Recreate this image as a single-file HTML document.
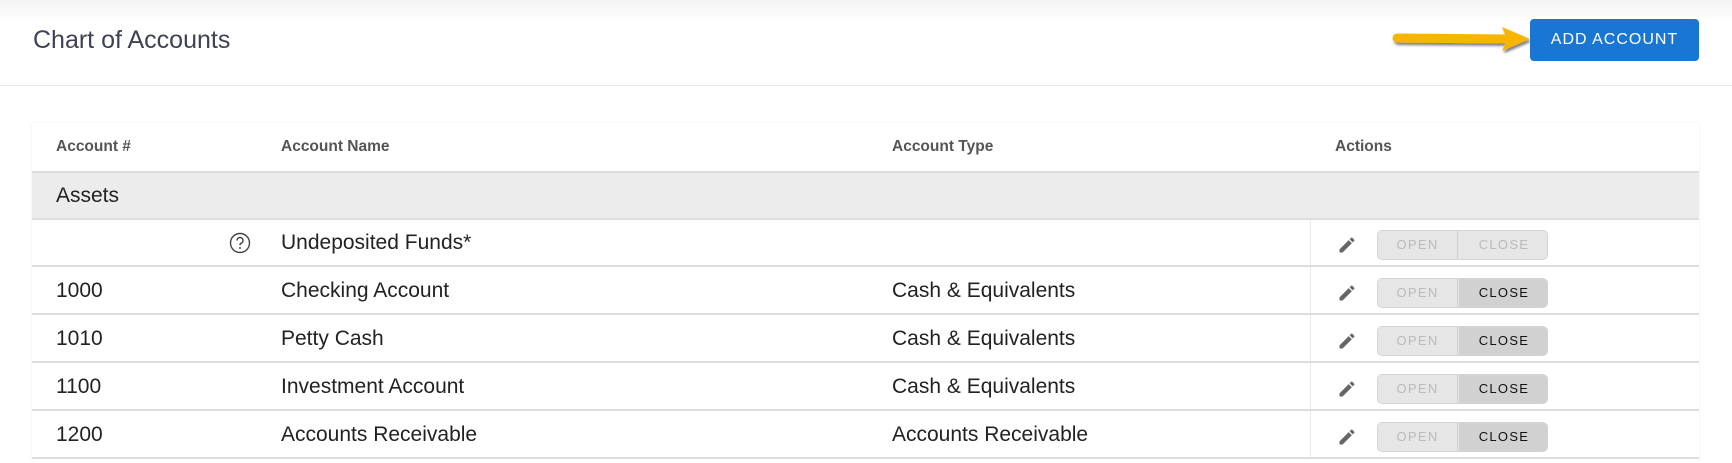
<!DOCTYPE html>
<html><head><meta charset="utf-8"><style>
*{box-sizing:border-box;margin:0;padding:0}
body{width:1732px;height:457px;overflow:hidden;background:#fff;font-family:"Liberation Sans",Arial,sans-serif;position:relative}
.top{position:absolute;left:0;top:0;width:1732px;height:86px;background:linear-gradient(#f3f3f3 0,#fff 22px);border-bottom:1px solid #e8e8e8}
.title{position:absolute;left:33px;top:26px;font-size:25px;color:#3f4254}
.btn{position:absolute;left:1530px;top:19px;width:169px;height:42px;background:#1976d2;border-radius:4px;color:#fff;font-size:16px;letter-spacing:1px;text-align:center;line-height:42px}
.card{position:absolute;left:32px;top:123px;width:1667px;height:340px;background:#fff;border-radius:4px;box-shadow:0 0 3px rgba(0,0,0,.08)}
.row{position:absolute;left:32px;width:1667px;border-bottom:2px solid #ddd}
.c{position:absolute;top:0;white-space:nowrap}
.h{font-weight:bold;font-size:15.5px;color:#555}
.b{font-size:21px;color:#222}
.tg{position:absolute;left:1377px;width:171px;height:30px;border:1px solid #d4d4d4;border-radius:5px;background:#e6e6e6;overflow:hidden;font-size:13px;letter-spacing:1.3px;color:#bbb}
.tg span{position:absolute;top:0;height:28px;line-height:28px;text-align:center}
.o{left:0;width:80px;border-right:1px solid #d0d0d0}
.cl{left:81px;width:90px}
.act{background:#d1d1d1;color:#111}
</style></head><body>
<div class="top"></div>
<div class="title">Chart of Accounts</div>
<svg style="position:absolute;left:1390px;top:24px" width="145" height="32" viewBox="0 0 145 32">
<defs><filter id="s"><feDropShadow dx="1.5" dy="2.5" stdDeviation="1.2" flood-color="#000" flood-opacity=".5"/></filter></defs>
<g filter="url(#s)"><path d="M7 14 L118 15" stroke="#f7b500" stroke-width="9" stroke-linecap="round"/><path d="M112 3 L140 15 L112 27 L117 15 Z" fill="#f7b500"/></g>
</svg>
<div class="btn">ADD ACCOUNT</div>
<div class="card"></div>
<div class="row" style="top:123px;height:50px"><div class="c h" style="left:24px;top:15px">Account #</div><div class="c h" style="left:249px;top:15px">Account Name</div><div class="c h" style="left:860px;top:15px">Account Type</div><div class="c h" style="left:1303px;top:15px">Actions</div></div>
<div class="row" style="top:173px;height:47px;background:#ececec"><div class="c b" style="left:24px;top:11px">Assets</div></div>
<div style="position:absolute;left:1310px;top:220px;width:1px;height:237px;background:#eaeaea"></div>
<div class="row" style="top:220px;height:47px"><svg class="c" style="left:197px;top:12px" width="22" height="22" viewBox="0 0 22 22"><circle cx="11" cy="11" r="9.5" fill="none" stroke="#444" stroke-width="1.4"/><path d="M8 8.5a3 3 0 1 1 4 2.8c-.8.4-1 .9-1 1.8" fill="none" stroke="#444" stroke-width="1.5"/><circle cx="11" cy="16" r="1" fill="#444"/></svg><div class="c b" style="left:249px;top:11px">Undeposited Funds*</div></div>
<div class="row" style="top:267px;height:48px"><div class="c b" style="left:24px;top:12px">1000</div><div class="c b" style="left:249px;top:12px">Checking Account</div><div class="c b" style="left:860px;top:12px">Cash &amp; Equivalents</div></div>
<div class="row" style="top:315px;height:48px"><div class="c b" style="left:24px;top:12px">1010</div><div class="c b" style="left:249px;top:12px">Petty Cash</div><div class="c b" style="left:860px;top:12px">Cash &amp; Equivalents</div></div>
<div class="row" style="top:363px;height:48px"><div class="c b" style="left:24px;top:12px">1100</div><div class="c b" style="left:249px;top:12px">Investment Account</div><div class="c b" style="left:860px;top:12px">Cash &amp; Equivalents</div></div>
<div class="row" style="top:411px;height:48px"><div class="c b" style="left:24px;top:12px">1200</div><div class="c b" style="left:249px;top:12px">Accounts Receivable</div><div class="c b" style="left:860px;top:12px">Accounts Receivable</div></div>

<svg style="position:absolute;left:1337px;top:235px" width="20" height="20" viewBox="0 0 24 24"><path d="M3 17.25V21h3.75L17.8 9.94l-3.75-3.75L3 17.25zM20.7 7.04a1 1 0 0 0 0-1.41l-2.34-2.34a1 1 0 0 0-1.41 0l-1.83 1.83 3.75 3.75 1.83-1.830z" fill="#666"/></svg>
<div class="tg" style="top:230px"><span class="o">OPEN</span><span class="cl">CLOSE</span></div>
<svg style="position:absolute;left:1337px;top:283px" width="20" height="20" viewBox="0 0 24 24"><path d="M3 17.25V21h3.75L17.8 9.94l-3.75-3.75L3 17.25zM20.7 7.04a1 1 0 0 0 0-1.41l-2.34-2.34a1 1 0 0 0-1.41 0l-1.83 1.83 3.75 3.75 1.83-1.83z" fill="#666"/></svg>
<div class="tg" style="top:278px"><span class="o">OPEN</span><span class="cl act">CLOSE</span></div>
<svg style="position:absolute;left:1337px;top:331px" width="20" height="20" viewBox="0 0 24 24"><path d="M3 17.25V21h3.75L17.8 9.94l-3.75-3.75L3 17.25zM20.7 7.04a1 1 0 0 0 0-1.41l-2.34-2.34a1 1 0 0 0-1.41 0l-1.83 1.83 3.75 3.75 1.83-1.83z" fill="#666"/></svg>
<div class="tg" style="top:326px"><span class="o">OPEN</span><span class="cl act">CLOSE</span></div>
<svg style="position:absolute;left:1337px;top:379px" width="20" height="20" viewBox="0 0 24 24"><path d="M3 17.25V21h3.75L17.8 9.94l-3.75-3.75L3 17.25zM20.7 7.04a1 1 0 0 0 0-1.41l-2.34-2.34a1 1 0 0 0-1.41 0l-1.83 1.83 3.75 3.75 1.83-1.83z" fill="#666"/></svg>
<div class="tg" style="top:374px"><span class="o">OPEN</span><span class="cl act">CLOSE</span></div>
<svg style="position:absolute;left:1337px;top:427px" width="20" height="20" viewBox="0 0 24 24"><path d="M3 17.25V21h3.75L17.8 9.94l-3.75-3.75L3 17.25zM20.7 7.04a1 1 0 0 0 0-1.41l-2.34-2.34a1 1 0 0 0-1.41 0l-1.83 1.83 3.75 3.75 1.83-1.83z" fill="#666"/></svg>
<div class="tg" style="top:422px"><span class="o">OPEN</span><span class="cl act">CLOSE</span></div>
</body></html>
